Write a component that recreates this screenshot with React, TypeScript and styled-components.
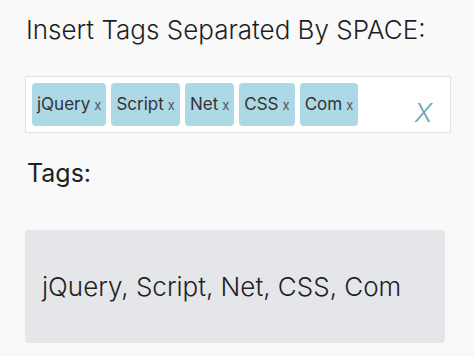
import { useState } from "react";
import styled, { createGlobalStyle } from "styled-components";

const GlobalStyle = createGlobalStyle`
  html, body {
    margin: 0;
    padding: 0;
    background: #f9f9fa;
  }
  body {
    font-family: Inter, "Noto Sans", sans-serif;
    color: #1f1f1f;
  }
`;

const Page = styled.div`
  display: flex;
  flex-direction: column;
  padding: 14px 29px 0 25px;
`;

const Heading = styled.h1`
  margin: 0;
  font-size: 26px;
  font-weight: 300;
  line-height: 1.2;
  padding-left: 1px;
`;

const TagInput = styled.div`
  margin-top: 31px;
  width: 426px;
  height: 57px;
  box-sizing: border-box;
  display: flex;
  align-items: center;
  gap: 5px;
  padding: 0 18px 0 6px;
  background: #ffffff;
  border: 1px solid #e2e2e2;
`;

const Tag = styled.span`
  display: inline-flex;
  align-items: baseline;
  gap: 4px;
  height: 43px;
  line-height: 43px;
  padding: 0 5px;
  border-radius: 4px;
  background: #add8e6;
  font-size: 17px;
  color: #333;
`;

const Remove = styled.span`
  font-size: 13px;
  color: #555;
  cursor: pointer;
`;

const Clear = styled.span`
  margin-left: auto;
  align-self: flex-end;
  margin-bottom: 4px;
  font-size: 26px;
  font-weight: 300;
  font-style: italic;
  color: #5ea8b6;
  cursor: pointer;
`;

const SubHeading = styled.h2`
  margin: 25px 0 0 2px;
  font-size: 25px;
  font-weight: 400;
  line-height: 1.2;
`;

const Output = styled.div`
  margin-top: 42px;
  width: 420px;
  height: 113px;
  box-sizing: border-box;
  display: flex;
  align-items: center;
  padding-left: 17px;
  border-radius: 4px;
  background: #e5e6ea;
  font-size: 26px;
  font-weight: 300;
  color: #1f1f1f;
`;

export default function App() {
  const [tags, setTags] = useState(["jQuery", "Script", "Net", "CSS", "Com"]);

  return (
    <>
      <GlobalStyle />
      <Page>
        <Heading>Insert Tags Separated By SPACE:</Heading>
        <TagInput>
          {tags.map((tag) => (
            <Tag key={tag}>
              {tag}
              <Remove onClick={() => setTags(tags.filter((t) => t !== tag))}>
                x
              </Remove>
            </Tag>
          ))}
          <Clear onClick={() => setTags([])}>X</Clear>
        </TagInput>
        <SubHeading>Tags:</SubHeading>
        <Output>{tags.join(", ")}</Output>
      </Page>
    </>
  );
}
